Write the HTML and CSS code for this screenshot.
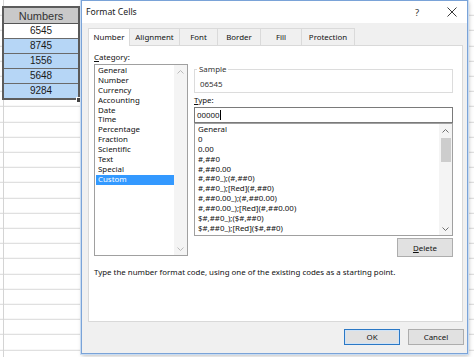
FILE: index.html
```html
<!DOCTYPE html>
<html lang="en">
<head>
  <meta charset="UTF-8">
  <title>Format Cells</title>
  <link rel="stylesheet" href="styles.css">
</head>
<body>
  <div class="sheet">
    <table class="data">
      <tr><th>Numbers</th></tr>
      <tr><td class="active">6545</td></tr>
      <tr><td>8745</td></tr>
      <tr><td>1556</td></tr>
      <tr><td>5648</td></tr>
      <tr><td>9284</td></tr>
    </table>
    <span class="fill-handle"></span>
  </div>

  <div class="dialog">
    <div class="titlebar">
      <span class="title">Format Cells</span>
      <span class="help">?</span>
      <span class="close">
        <svg width="10" height="10" viewBox="0 0 10 10"><path d="M0.5 0.5 L9.5 9.5 M9.5 0.5 L0.5 9.5" stroke="#222" stroke-width="0.9" fill="none"/></svg>
      </span>
    </div>

    <div class="body">
      <ul class="tabs">
        <li class="active">Number</li>
        <li>Alignment</li>
        <li>Font</li>
        <li>Border</li>
        <li>Fill</li>
        <li>Protection</li>
      </ul>

      <div class="panel">
        <div class="cols">
          <div class="cat-col">
            <div class="label"><u>C</u>ategory:</div>
            <div class="listbox cat-list">
              <ul>
                <li>General</li>
                <li>Number</li>
                <li>Currency</li>
                <li>Accounting</li>
                <li>Date</li>
                <li>Time</li>
                <li>Percentage</li>
                <li>Fraction</li>
                <li>Scientific</li>
                <li>Text</li>
                <li>Special</li>
                <li class="selected">Custom</li>
              </ul>
              <div class="scrollbar">
                <span class="arrow-box"><svg width="7" height="4" viewBox="0 0 7 4"><polyline points="0.5,3.5 3.5,0.5 6.5,3.5" fill="none" stroke="currentColor" stroke-width="0.9"/></svg></span>
                <span class="arrow-box bottom"><svg width="7" height="4" viewBox="0 0 7 4"><polyline points="0.5,0.5 3.5,3.5 6.5,0.5" fill="none" stroke="currentColor" stroke-width="0.9"/></svg></span>
              </div>
            </div>
          </div>

          <div class="main-col">
            <div class="sample">
              <span class="sample-label">Sample</span>
              <div class="sample-value">06545</div>
            </div>
            <div class="label type-label"><u>T</u>ype:</div>
            <div class="type-input">00000<span class="caret"></span></div>
            <div class="listbox type-list">
              <ul>
                <li>General</li>
                <li>0</li>
                <li>0.00</li>
                <li>#,##0</li>
                <li>#,##0.00</li>
                <li>#,##0_);(#,##0)</li>
                <li>#,##0_);[Red](#,##0)</li>
                <li>#,##0.00_);(#,##0.00)</li>
                <li>#,##0.00_);[Red](#,##0.00)</li>
                <li>$#,##0_);($#,##0)</li>
                <li>$#,##0_);[Red]($#,##0)</li>
              </ul>
              <div class="scrollbar">
                <span class="arrow-box"><svg width="7" height="4" viewBox="0 0 7 4"><polyline points="0.5,3.5 3.5,0.5 6.5,3.5" fill="none" stroke="currentColor" stroke-width="0.9"/></svg></span>
                <span class="thumb"></span>
                <span class="arrow-box bottom"><svg width="7" height="4" viewBox="0 0 7 4"><polyline points="0.5,0.5 3.5,3.5 6.5,0.5" fill="none" stroke="currentColor" stroke-width="0.9"/></svg></span>
              </div>
            </div>
            <div class="delete-row">
              <button class="btn delete"><u>D</u>elete</button>
            </div>
          </div>
        </div>
        <p class="hint">Type the number format code, using one of the existing codes as a starting point.</p>
      </div>

      <div class="footer">
        <button class="btn default">OK</button>
        <button class="btn">Cancel</button>
      </div>
    </div>
  </div>
</body>
</html>
```

FILE: styles.css
```css
html, body {
  margin: 0;
  padding: 0;
}

body {
  width: 474px;
  height: 357px;
  overflow: hidden;
  position: relative;
  font-family: "Noto Sans", "Open Sans", sans-serif;
  background-color: #fff;
  background-image:
    linear-gradient(to right, transparent 3px, #d4d4d4 3px, #d4d4d4 4px, transparent 4px),
    repeating-linear-gradient(to bottom, transparent 0, transparent 14.2px, #d8d8d8 14.2px, #d8d8d8 15.2px);
  background-position: 0 0, 0 0.8px;
}

/* spreadsheet */
.sheet {
  position: relative;
  padding: 7px 0 0 3px;
}

.data {
  border-collapse: collapse;
  font-family: "Liberation Sans", Arial, sans-serif;
  font-size: 10px;
  color: #1a1a1a;
  outline: 2px solid #5c5c5c;
  outline-offset: -1px;
}

.data th,
.data td {
  width: 74px;
  height: 14px;
  padding: 0;
  text-align: center;
  border: 1px solid #6a6a6a;
  background: #b6d6f6;
  line-height: 14px;
}

.data th {
  height: 15px;
  font-weight: normal;
  font-size: 11px;
  color: #333;
  background: #c9c9c9;
  border-color: #555;
}

.data td.active {
  background: #fff;
}

.fill-handle {
  position: absolute;
  left: 76px;
  top: 97px;
  width: 4px;
  height: 4px;
  background: #444;
  border: 1px solid #fff;
}

/* dialog window */
.dialog {
  position: absolute;
  left: 81px;
  top: 0;
  width: 385px;
  height: 352px;
  border: 1px solid #7aa3d8;
  box-shadow: 0 0 0 1px #c9dcf2, 1px 2px 4px rgba(0, 0, 0, 0.25);
  background: #f0f0f0;
  display: flex;
  flex-direction: column;
  font-size: 7.9px;
  color: #111;
}

.titlebar {
  height: 22px;
  background: #fff;
  display: flex;
  align-items: center;
  padding-left: 4px;
}

.title {
  flex-grow: 1;
  font-size: 8.7px;
  color: #1a1a1a;
}

.help {
  width: 20px;
  text-align: center;
  font-size: 9.5px;
  color: #333;
  margin-right: 15px;
}

.close {
  width: 20px;
  display: flex;
  justify-content: center;
  margin-right: 5px;
}

.body {
  flex-grow: 1;
  display: flex;
  flex-direction: column;
  padding: 5px 3px 0 6px;
}

.tabs {
  list-style-type: none;
  margin: 0;
  padding: 0;
  display: flex;
  height: 17px;
}

.tabs li {
  box-sizing: border-box;
  text-align: center;
  line-height: 16px;
  border: 1px solid #dadada;
  border-left: none;
  border-bottom: none;
  background: #f0f0f0;
  color: #111;
}

.tabs li:first-child {
  border-left: 1px solid #dadada;
}

.tabs li:nth-child(1) { width: 42px; }
.tabs li:nth-child(2) { width: 50px; }
.tabs li:nth-child(3) { width: 38px; }
.tabs li:nth-child(4) { width: 43px; }
.tabs li:nth-child(5) { width: 41px; }
.tabs li:nth-child(6) { width: 53px; }

.tabs li.active {
  background: #fff;
  position: relative;
  z-index: 1;
  height: 18px;
}

.panel {
  height: 277px;
  background: #fff;
  border: 1px solid #d9d9d9;
  padding: 6px 5px 0 5px;
  box-sizing: border-box;
  margin-right: 1px;
}

.cols {
  display: flex;
  gap: 6px;
}

.label {
  line-height: 11px;
  height: 12px;
  color: #111;
}

.cat-col {
  width: 94px;
}

.listbox {
  display: flex;
  border: 1px solid #a0a0a0;
  background: #fff;
}

.listbox ul {
  flex-grow: 1;
  list-style-type: none;
  margin: 0;
  padding: 1px 0 0 1px;
}

.listbox li {
  line-height: 9.9px;
  height: 9.9px;
  padding-left: 2px;
  white-space: nowrap;
  color: #111;
}

.cat-list {
  height: 190px;
}

.cat-list li.selected {
  background: #3399ff;
  color: #fff;
}

.scrollbar {
  width: 13px;
  background: #f4f4f4;
  display: flex;
  flex-direction: column;
  align-items: center;
  color: #606060;
}

.cat-list .scrollbar {
  color: #b4b4b4;
}

.arrow-box {
  height: 13px;
  width: 13px;
  display: flex;
  align-items: center;
  justify-content: center;
}

.arrow-box.bottom {
  margin-top: auto;
}

.thumb {
  display: block;
  width: 10px;
  height: 24px;
  background: #cdcdcd;
  margin-top: 1px;
}

.main-col {
  flex-grow: 1;
  padding-right: 4px;
}

.sample {
  margin-top: 17px;
  height: 22px;
  border: 1px solid #dcdcdc;
}

.sample-label {
  display: block;
  width: max-content;
  margin: -5px 0 0 2px;
  padding: 0 2px;
  background: #fff;
  line-height: 9px;
  color: #333;
}

.sample-value {
  margin-top: 3px;
  padding-left: 5px;
  line-height: 14px;
  color: #333;
}

.type-label {
  margin-top: 2px;
}

.type-input {
  height: 14px;
  line-height: 14px;
  border: 1px solid #7a7a7a;
  padding-left: 2px;
  display: flex;
  align-items: center;
  color: #111;
}

.caret {
  width: 1px;
  height: 10px;
  background: #000;
}

.type-list {
  height: 111px;
}

.delete-row {
  display: flex;
  justify-content: flex-end;
  margin-top: 2px;
}

.btn {
  width: 56px;
  height: 19px;
  padding: 0;
  font-family: inherit;
  font-size: 7.9px;
  color: #111;
  background: #e1e1e1;
  border: 1px solid #adadad;
}

.hint {
  margin: 10px 0 0 0;
  line-height: 11px;
  color: #111;
  white-space: nowrap;
}

.footer {
  flex-grow: 1;
  display: flex;
  justify-content: flex-end;
  align-items: flex-start;
  gap: 8px;
  padding: 7px 0 0 0;
}

.footer .btn {
  height: 16px;
}

.btn.default {
  border: 1px solid #2b78c5;
  box-shadow: inset 0 0 0 1px #cfe3f7;
}
```
